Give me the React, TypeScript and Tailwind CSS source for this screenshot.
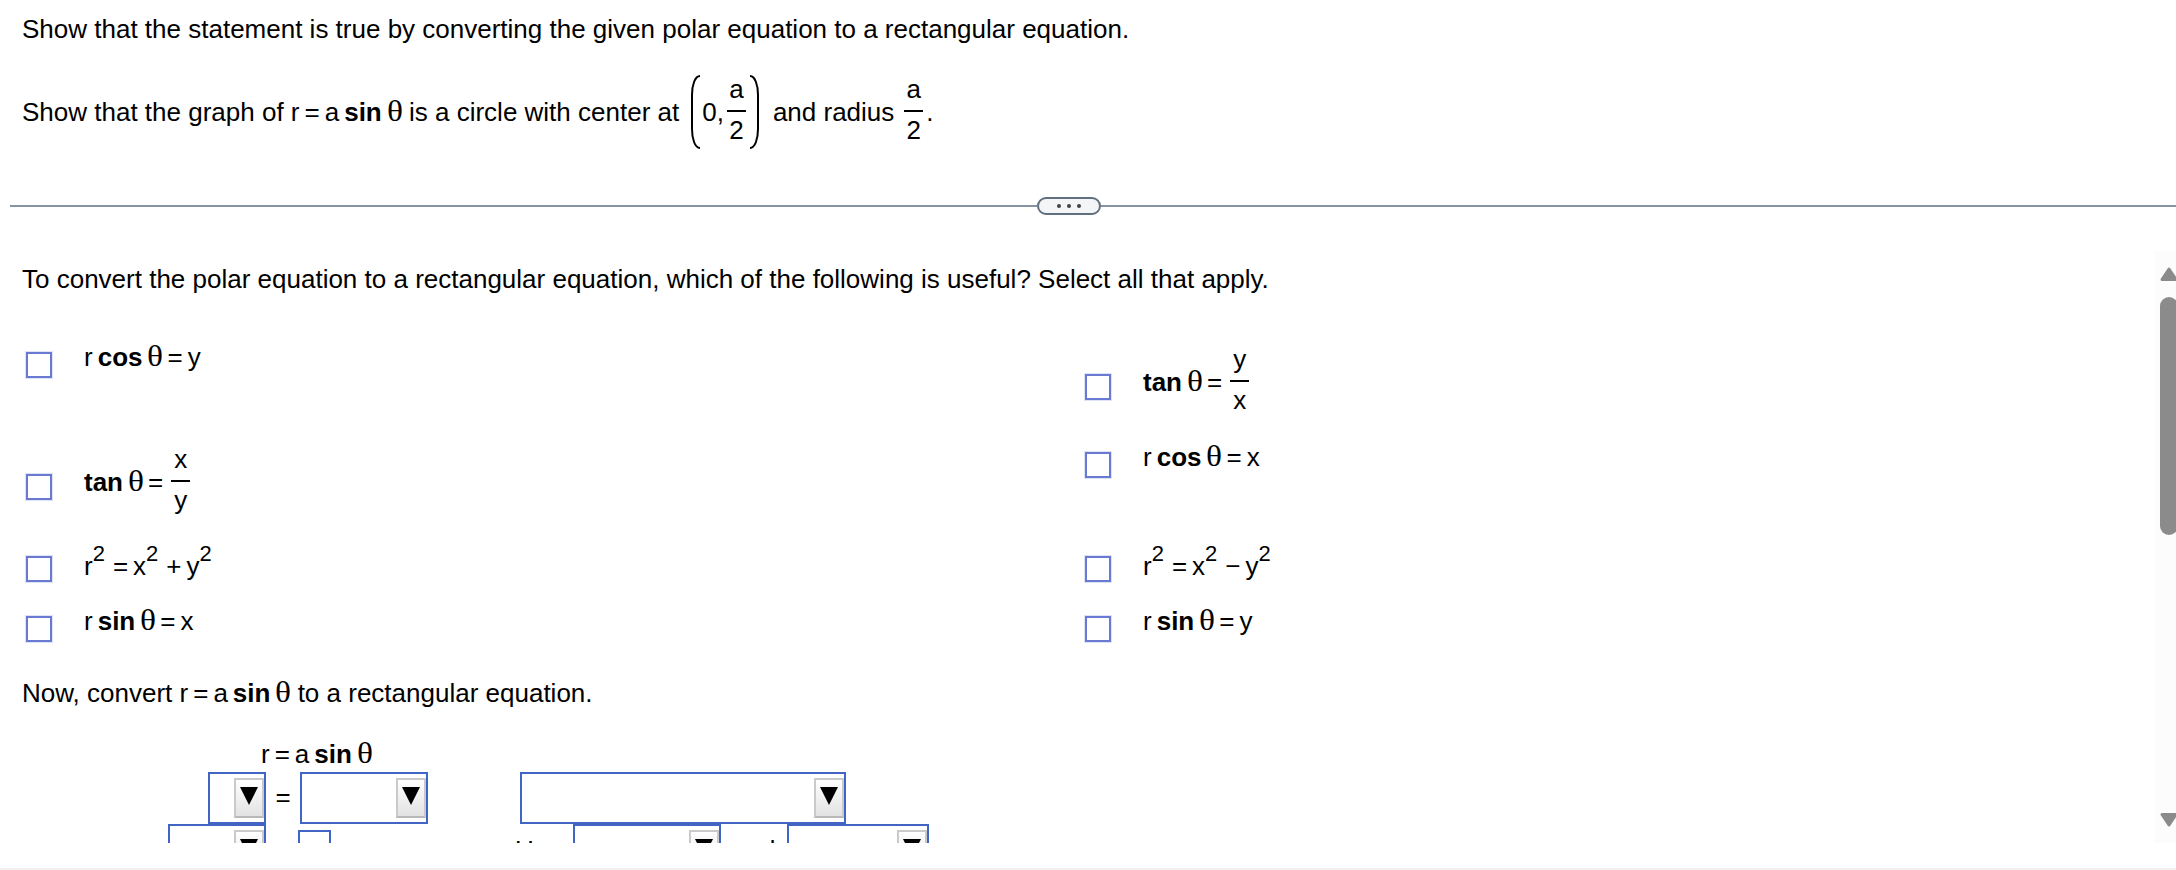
import type { ReactNode } from "react";

type Item = { label: ReactNode; row: string; box: string };

function Theta() {
  return (
    <span className="ml-[5px] inline-block w-[15px] origin-left scale-x-115 font-['Liberation_Serif',serif] text-[29px] leading-[0]">
      θ
    </span>
  );
}

function Fn({ name }: { name: string }) {
  return (
    <>
      <b className="font-bold">{name}</b>
      <Theta />
    </>
  );
}

function Sup() {
  return <span className="align-[14px] text-[22px] leading-[0]">2</span>;
}

function Op({ children }: { children: string }) {
  return <span className="mx-[5px]">{children}</span>;
}

function Frac({ top, bottom }: { top: string; bottom: string }) {
  return (
    <span className="mb-[2px] flex h-[68px] w-[19px] shrink-0 flex-col items-center leading-[24px]">
      <span className="h-[33px]">{top}</span>
      <span className="h-[2px] w-full bg-black" />
      <span className="pt-[6px]">{bottom}</span>
    </span>
  );
}

function Paren({ flip }: { flip?: boolean }) {
  return (
    <svg width="9" height="74" viewBox="0 0 9 74" fill="none" stroke="#000" strokeWidth="2" className={flip ? "-scale-x-100" : ""}>
      <path d="M9 1C4 1 1 10 1 20V54C1 64 4 73 9 73" />
    </svg>
  );
}

function Polar() {
  return (
    <>
      r<Op>=</Op>a<span className="ml-[5px]"><Fn name="sin" /></span>
    </>
  );
}

function Option({ label, row, box }: Item) {
  return (
    <label className={`flex items-start ${row}`}>
      <span className={`h-[26px] w-[26px] shrink-0 border-2 border-[#6a7ad3] bg-white shadow-[0_0_0_1px_#dfe3f6] ${box}`} />
      <span className="ml-8 flex items-center whitespace-pre">{label}</span>
    </label>
  );
}

function Select({ className }: { className: string }) {
  return (
    <div className={`flex h-[52px] shrink-0 justify-end border-2 border-[#4065c5] bg-white pt-1 ${className}`}>
      <span className="flex h-10 w-[30px] justify-center border-2 border-[#cacaca] border-b-[#b8b8b8] bg-linear-to-b from-white to-[#e2e2e2] pt-[7px]">
        <svg width="18" height="18" viewBox="0 0 18 18">
          <path d="M0 0H18L9 18Z" fill="#000" />
        </svg>
      </span>
    </div>
  );
}

const LEFT: Item[] = [
  { label: <span>r<span className="ml-[5px]"><Fn name="cos" /></span><Op>=</Op>y</span>, row: "h-[105px]", box: "mt-[10px]" },
  { label: <><span><Fn name="tan" /><span className="ml-[5px] mr-[8px]">=</span></span><Frac top="x" bottom="y" /></>, row: "h-[104px]", box: "mt-[27px]" },
  { label: <span>r<Sup /><span className="ml-[8px] mr-[5px]">=</span>x<Sup /><span className="ml-[8px] mr-[5px]">+</span>y<Sup /></span>, row: "h-[55px]", box: "mt-[5px]" },
  { label: <span>r<span className="ml-[5px]"><Fn name="sin" /></span><Op>=</Op>x</span>, row: "h-[72px]", box: "mt-[10px]" },
];

const RIGHT: Item[] = [
  { label: <><span><Fn name="tan" /><span className="ml-[5px] mr-[8px]">=</span></span><Frac top="y" bottom="x" /></>, row: "h-[95px]", box: "mt-[27px]" },
  { label: <span>r<span className="ml-[5px]"><Fn name="cos" /></span><Op>=</Op>x</span>, row: "h-[109px]", box: "mt-[10px]" },
  { label: <span>r<Sup /><span className="ml-[8px] mr-[5px]">=</span>x<Sup /><span className="ml-[8px] mr-[5px]">−</span>y<Sup /></span>, row: "h-[55px]", box: "mt-[5px]" },
  { label: <span>r<span className="ml-[5px]"><Fn name="sin" /></span><Op>=</Op>y</span>, row: "h-[72px]", box: "mt-[10px]" },
];

function Divider() {
  return (
    <div className="flex h-[18px] items-center pl-[10px]">
      <span className="h-[2px] w-[1027px] bg-[#8792a2]" />
      <button className="flex h-[18px] w-16 items-center justify-center gap-[6px] rounded-full border-2 border-[#61707f] bg-[#f3f5f7]">
        <span className="h-1 w-1 rounded-full bg-[#444]" />
        <span className="h-1 w-1 rounded-full bg-[#444]" />
        <span className="h-1 w-1 rounded-full bg-[#444]" />
      </button>
      <span className="h-[2px] flex-1 bg-[#8792a2]" />
    </div>
  );
}

function Scrollbar() {
  return (
    <div className="flex w-[22px] shrink-0 flex-col justify-between overflow-hidden bg-[#fcfcfc] pt-4 pb-4 pl-[6px]">
      <div className="flex flex-col gap-4">
        <svg width="18" height="14" viewBox="0 0 18 14" className="shrink-0">
          <path d="M2 12.5L9 2L16 12.5Z" fill="#8b8b8b" stroke="#8b8b8b" strokeWidth="3" strokeLinejoin="round" />
        </svg>
        <span className="h-[238px] w-[18px] rounded-full bg-[#8b8b8b]" />
      </div>
      <svg width="18" height="14" viewBox="0 0 18 14" className="shrink-0">
        <path d="M2 1.5L9 12L16 1.5Z" fill="#8b8b8b" stroke="#8b8b8b" strokeWidth="3" strokeLinejoin="round" />
      </svg>
    </div>
  );
}

export default function App() {
  return (
    <div className="flex h-[870px] w-[2176px] flex-col overflow-hidden bg-white font-['Liberation_Sans',Arial,sans-serif] text-[26px] leading-[30px] text-black">
      <header className="h-[197px] shrink-0 pt-[14px] pl-[22px]">
        <p>Show that the statement is true by converting the given polar equation to a rectangular equation.</p>
        <div className="mt-[31px] flex h-[74px] items-center whitespace-pre">
          <span>Show that the graph of <Polar /> is a circle with center at</span>
          <span className="ml-[12px] mr-[14px] flex items-center">
            <Paren />
            <span className="ml-[2px] mr-[3px]">0,</span>
            <Frac top="a" bottom="2" />
            <span className="ml-1"><Paren flip /></span>
          </span>
          <span className="mr-[10px]">and radius</span>
          <Frac top="a" bottom="2" />
          <span className="ml-[3px]">.</span>
        </div>
      </header>

      <Divider />

      <div className="mt-9 flex h-[592px] shrink-0">
        <main className="flex-1 overflow-hidden pt-[13px] pl-[22px]">
          <p>To convert the polar equation to a rectangular equation, which of the following is useful? Select all that apply.</p>
          <div className="mt-12 flex h-[336px] pl-1">
            <div className="w-[1059px]">
              {LEFT.map((item, i) => <Option key={i} {...item} />)}
            </div>
            <div className="pt-[5px]">
              {RIGHT.map((item, i) => <Option key={i} {...item} />)}
            </div>
          </div>

          <p className="whitespace-pre">Now, convert <Polar /> to a rectangular equation.</p>
          <p className="mt-[31px] pl-[239px]"><Polar /></p>
          <div className="mt-[3px] flex items-center">
            <Select className="ml-[186px] w-[58px]" />
            <span className="mb-[2px] w-[34px] text-center">=</span>
            <Select className="w-32" />
            <Select className="ml-[92px] w-[326px]" />
          </div>
          <div className="flex items-start whitespace-pre">
            <Select className="ml-[146px] w-[98px]" />
            <span className="ml-8 mt-[6px] h-10 w-[33px] border-2 border-[#4065c5] bg-white" />
            <span className="ml-[184px] mt-[11px] w-[58px]">Use</span>
            <Select className="w-[148px]" />
            <span className="mt-[11px] w-[66px] pl-[11px]">and</span>
            <Select className="w-[142px]" />
          </div>
        </main>
        <Scrollbar />
      </div>
      <div className="mt-[25px] h-[2px] shrink-0 bg-[#f0f0f0]" />
    </div>
  );
}
